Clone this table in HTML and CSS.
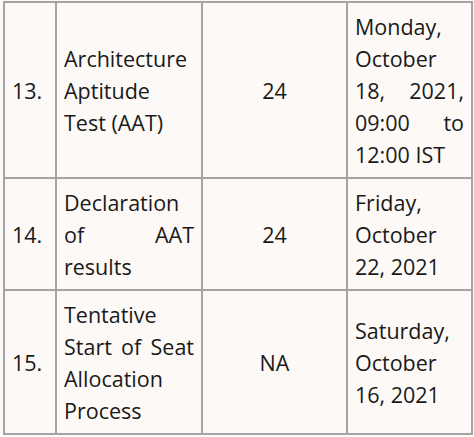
FILE: index.html
```html
<!DOCTYPE html>
<html>
<head>
<meta charset="utf-8">
<link rel="stylesheet" href="styles.css">
</head>
<body>
<div class="wrap">
<table class="sched">
<colgroup>
<col class="c1"><col class="c2"><col class="c3"><col class="c4">
</colgroup>
<tbody>
<tr>
<td class="num">13.</td>
<td class="just">Architecture Aptitude Test (AAT)</td>
<td class="mid">24</td>
<td class="just">Monday, October 18, 2021, 09:00 to 12:00 IST</td>
</tr>
<tr>
<td class="num">14.</td>
<td class="just">Declaration of AAT results</td>
<td class="mid">24</td>
<td class="just">Friday, October 22, 2021</td>
</tr>
<tr>
<td class="num">15.</td>
<td class="just">Tentative Start of Seat Allocation Process</td>
<td class="mid">NA</td>
<td class="just">Saturday, October 16, 2021</td>
</tr>
</tbody>
</table>
</div>
</body>
</html>
```

FILE: styles.css
```css
html, body {
  margin: 0;
  padding: 0;
  background: #fcf9f6;
}
.wrap {
  padding: 1px 0 0 3px;
}
.sched {
  border-collapse: collapse;
  table-layout: fixed;
  width: 468px;
  font-family: "Open Sans", "Noto Sans", sans-serif;
  font-size: 21.5px;
  line-height: 32px;
  color: #1a1a1a;
  background: #fcf9f6;
}
.c1 { width: 52px; }
.c2 { width: 146px; }
.c3 { width: 145px; }
.c4 { width: 125px; }
.sched td {
  border: 2px solid #a4a4a4;
  padding: 8px 7px 6px 7px;
  vertical-align: middle;
}
.num { text-align: left; }
.just { text-align: justify; }
.mid { text-align: center; }
```
